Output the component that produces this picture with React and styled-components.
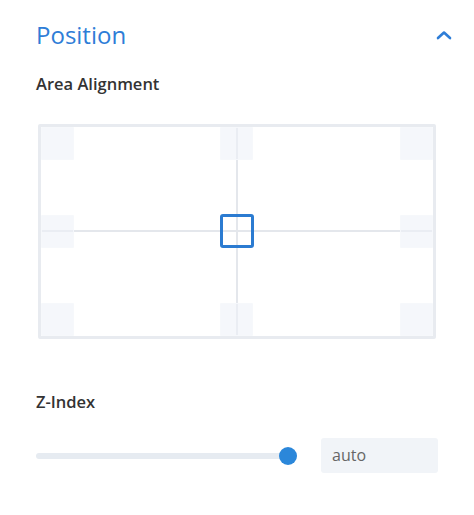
import React from 'react'
import styled, { createGlobalStyle } from 'styled-components'

const Global = createGlobalStyle`
  body {
    margin: 0;
    padding: 0;
    background: #fff;
    font-family: "Open Sans", "Noto Sans", sans-serif;
  }
`

const Panel = styled.div`
  width: 474px;
  padding: 17px 22px 0 36px;
  box-sizing: border-box;
  display: flex;
  flex-direction: column;
`

const Header = styled.div`
  display: flex;
  align-items: center;
  justify-content: space-between;
  height: 36px;
`

const Title = styled.h2`
  margin: 0;
  font-size: 24px;
  font-weight: 400;
  color: #2e7dd7;
  line-height: 36px;
`

const Label = styled.div`
  font-size: 16.5px;
  font-weight: 600;
  color: #333;
  line-height: 24px;
  margin-top: ${p => p.top}px;
`

const Box = styled.div`
  position: relative;
  margin: 28px 0 0 2px;
  width: 398px;
  height: 215px;
  box-sizing: border-box;
  border: 3px solid #e8ebf0;
  border-radius: 2px;
  display: grid;
  grid-template-columns: repeat(3, 1fr);
  grid-template-rows: repeat(3, 1fr);

  &::before {
    content: '';
    position: absolute;
    left: 195px;
    top: 0;
    bottom: 0;
    width: 2px;
    background: #e4e7ec;
  }
  &::after {
    content: '';
    position: absolute;
    top: 103px;
    left: 0;
    right: 0;
    height: 2px;
    background: #e4e7ec;
  }
`

const Cell = styled.div`
  position: relative;
  z-index: 1;
  width: ${p => (p.active ? 34 : 33)}px;
  height: ${p => (p.active ? 34 : 33)}px;
  box-sizing: border-box;
  justify-self: ${p => ['start', 'center', 'end'][p.col]};
  align-self: ${p => ['start', 'center', 'end'][p.row]};
  background: ${p => (p.active ? 'transparent' : 'rgba(238, 242, 248, 0.6)')};
  border: ${p => (p.active ? '3px solid #2b7bd1' : '1px solid rgba(246, 248, 251, 0.9)')};
  border-radius: ${p => (p.active ? 3 : 1)}px;
  cursor: pointer;
`

const Row = styled.div`
  display: flex;
  align-items: center;
  margin-top: 24px;
`

const Track = styled.div`
  position: relative;
  width: 252px;
  height: 6px;
  border-radius: 3px;
  background: #e6ebf1;
`

const Thumb = styled.div`
  position: absolute;
  top: 50%;
  width: 18px;
  height: 18px;
  margin: -9px 0 0 -9px;
  border-radius: 50%;
  background: #2b87da;
`

const Input = styled.div`
  margin-left: 33px;
  width: 117px;
  height: 35px;
  box-sizing: border-box;
  padding-left: 11px;
  border-radius: 3px;
  background: #f1f4f8;
  color: #666;
  font-size: 16px;
  line-height: 35px;
`

const cells = [0, 1, 2].flatMap(row => [0, 1, 2].map(col => ({ row, col })))

export default function App() {
  return (
    <Panel>
      <Global />
      <Header>
        <Title>Position</Title>
        <svg width="16" height="10" viewBox="0 0 16 10">
          <path d="M2 8 L8 2.5 L14 8" fill="none" stroke="#2e7dd7" strokeWidth="2.6" strokeLinecap="round" strokeLinejoin="round" />
        </svg>
      </Header>
      <Label top={19}>Area Alignment</Label>
      <Box>
        {cells.map(c => (
          <Cell key={c.row + '-' + c.col} row={c.row} col={c.col} active={c.row === 1 && c.col === 1} />
        ))}
      </Box>
      <Label top={51}>Z-Index</Label>
      <Row>
        <Track>
          <Thumb style={{ left: '100%' }} />
        </Track>
        <Input>auto</Input>
      </Row>
    </Panel>
  )
}
